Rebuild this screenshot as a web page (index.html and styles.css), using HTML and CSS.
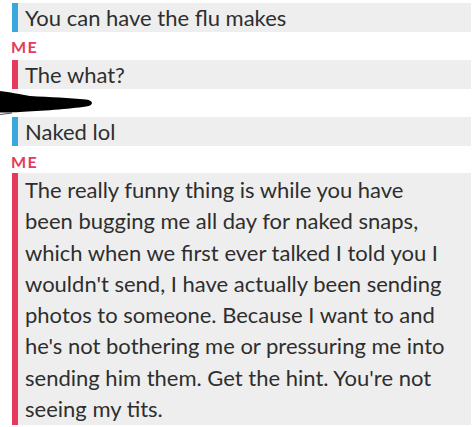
FILE: index.html
```html
<!DOCTYPE html>
<html>
<head>
    <title>Chat</title>
    <link rel="stylesheet" href="styles.css">
</head>
<body>
    <div class="chat">
        <div class="msg them">
            <div class="bar"></div>
            <div class="bubble">You can have the flu makes</div>
        </div>

        <div class="label label-first">ME</div>
        <div class="msg me">
            <div class="bar"></div>
            <div class="bubble">The what?</div>
        </div>

        <!-- scribbled-out name -->
        <div class="redact">
            <svg width="120" height="28" viewBox="0 0 120 28">
                <path d="M0 2 C10 3 18 5 30 7 C50 8 70 9 86 10.5 C94 11.5 94 16.5 86 17.5 C70 20 40 22 20 23 C10 23.5 4 23.5 0 23.5 Z" fill="#000"/>
                <path d="M0 25.5 L12 24" stroke="#555" stroke-width="1"/>
            </svg>
        </div>

        <div class="msg them">
            <div class="bar"></div>
            <div class="bubble">Naked lol</div>
        </div>

        <div class="label label-second">ME</div>
        <div class="msg me">
            <div class="bar"></div>
            <div class="bubble long">The really funny thing is while you have<br>been bugging me all day for naked snaps,<br>which when we first ever talked I told you I<br>wouldn't send, I have actually been sending<br>photos to someone. Because I want to and<br>he's not bothering me or pressuring me into<br>sending him them. Get the hint. You're not<br>seeing my tits.</div>
        </div>
    </div>
</body>
</html>
```

FILE: styles.css
```css
body {
    margin: 0;
    background: #FFFFFF;
    font-family: Lato, "Noto Sans", sans-serif;
    color: #2E2E2E;
}

.chat {
    padding: 3px 3px 0 12px;
}

.msg {
    display: flex;
}

.bar {
    width: 6px;
    flex: none;
}

.them .bar {
    background: #3AA7DC;
}

.me .bar {
    background: #E43A5C;
}

.bubble {
    flex: 1;
    background: #EEEEEE;
    padding-left: 7px;
    font-size: 22px;
    line-height: 29px;
    height: 29px;
    white-space: nowrap;
}

.bubble.long {
    height: auto;
    line-height: 31.3px;
    padding-top: 1px;
    padding-bottom: 1px;
}

.label {
    color: #E43A5C;
    font-size: 16px;
    font-weight: bold;
    letter-spacing: 1.5px;
    line-height: 18px;
    margin-left: -1px;
}

.label-first {
    margin-top: 6px;
    margin-bottom: 4px;
}

.label-second {
    margin-top: 7px;
    margin-bottom: 2px;
}

.redact {
    height: 28px;
    margin-left: -12px;
}

.redact svg {
    display: block;
}
```
